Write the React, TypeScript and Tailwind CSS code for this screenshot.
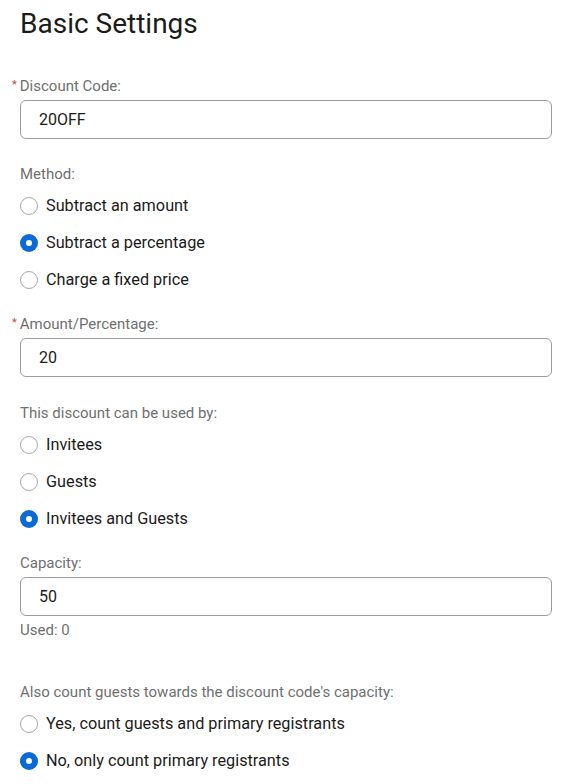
import React from "react";

const font = { fontFamily: "Roboto, 'Liberation Sans', sans-serif" };

function Label({ text, required }: { text: string; required?: boolean }) {
  return (
    <div className={`h-[20px] text-[15px] leading-[20px] text-[#6f6f6f] ${required ? "-ml-[8px]" : ""}`}>
      {required && <span className="relative top-[-3px] mr-[3px] text-[11px] text-[#d0413a]">*</span>}
      {text}
    </div>
  );
}

function Input({ value }: { value: string }) {
  return (
    <div className="mt-[4px] flex h-[39px] items-center rounded-[6px] border border-[#9c9c9c] bg-white pl-[18px] text-[16px] text-[#1b1b1b]">
      {value}
    </div>
  );
}

function Radio({ label, checked }: { label: string; checked?: boolean }) {
  return (
    <div className="flex h-[24px] items-center">
      {checked ? (
        <span className="flex h-[18px] w-[18px] items-center justify-center rounded-full bg-[#0b6ad6]">
          <span className="h-[6px] w-[6px] rounded-full bg-white" />
        </span>
      ) : (
        <span className="h-[18px] w-[18px] rounded-full border-[1.5px] border-[#a8a8a8] bg-white" />
      )}
      <span className="ml-[8px] text-[16.25px] leading-[24px] text-[#1b1b1b]">{label}</span>
    </div>
  );
}

function Group({ items }: { items: { label: string; checked?: boolean }[] }) {
  return (
    <div className="mt-[10px] flex flex-col gap-[13px]">
      {items.map((it) => (
        <Radio key={it.label} label={it.label} checked={it.checked} />
      ))}
    </div>
  );
}

export default function App() {
  return (
    <div className="min-h-[784px] bg-white pl-5 pr-[22px] pt-[8px]" style={font}>
      <h1 className="text-[28px] leading-[32px] font-normal text-[#1b1b1b]">Basic Settings</h1>

      <div className="mt-[36px]">
        <Label text="Discount Code:" required />
        <Input value="20OFF" />
      </div>

      <div className="mt-[25px]">
        <Label text="Method:" />
        <Group
          items={[
            { label: "Subtract an amount" },
            { label: "Subtract a percentage", checked: true },
            { label: "Charge a fixed price" },
          ]}
        />
      </div>

      <div className="mt-[22px]">
        <Label text="Amount/Percentage:" required />
        <Input value="20" />
      </div>

      <div className="mt-[26px]">
        <Label text="This discount can be used by:" />
        <Group
          items={[
            { label: "Invitees" },
            { label: "Guests" },
            { label: "Invitees and Guests", checked: true },
          ]}
        />
      </div>

      <div className="mt-[22px]">
        <Label text="Capacity:" />
        <Input value="50" />
        <div className="mt-[4px] h-[20px] text-[15px] leading-[20px] text-[#6f6f6f]">Used: 0</div>
      </div>

      <div className="mt-[42px]">
        <Label text="Also count guests towards the discount code's capacity:" />
        <Group
          items={[
            { label: "Yes, count guests and primary registrants" },
            { label: "No, only count primary registrants", checked: true },
          ]}
        />
      </div>
    </div>
  );
}
